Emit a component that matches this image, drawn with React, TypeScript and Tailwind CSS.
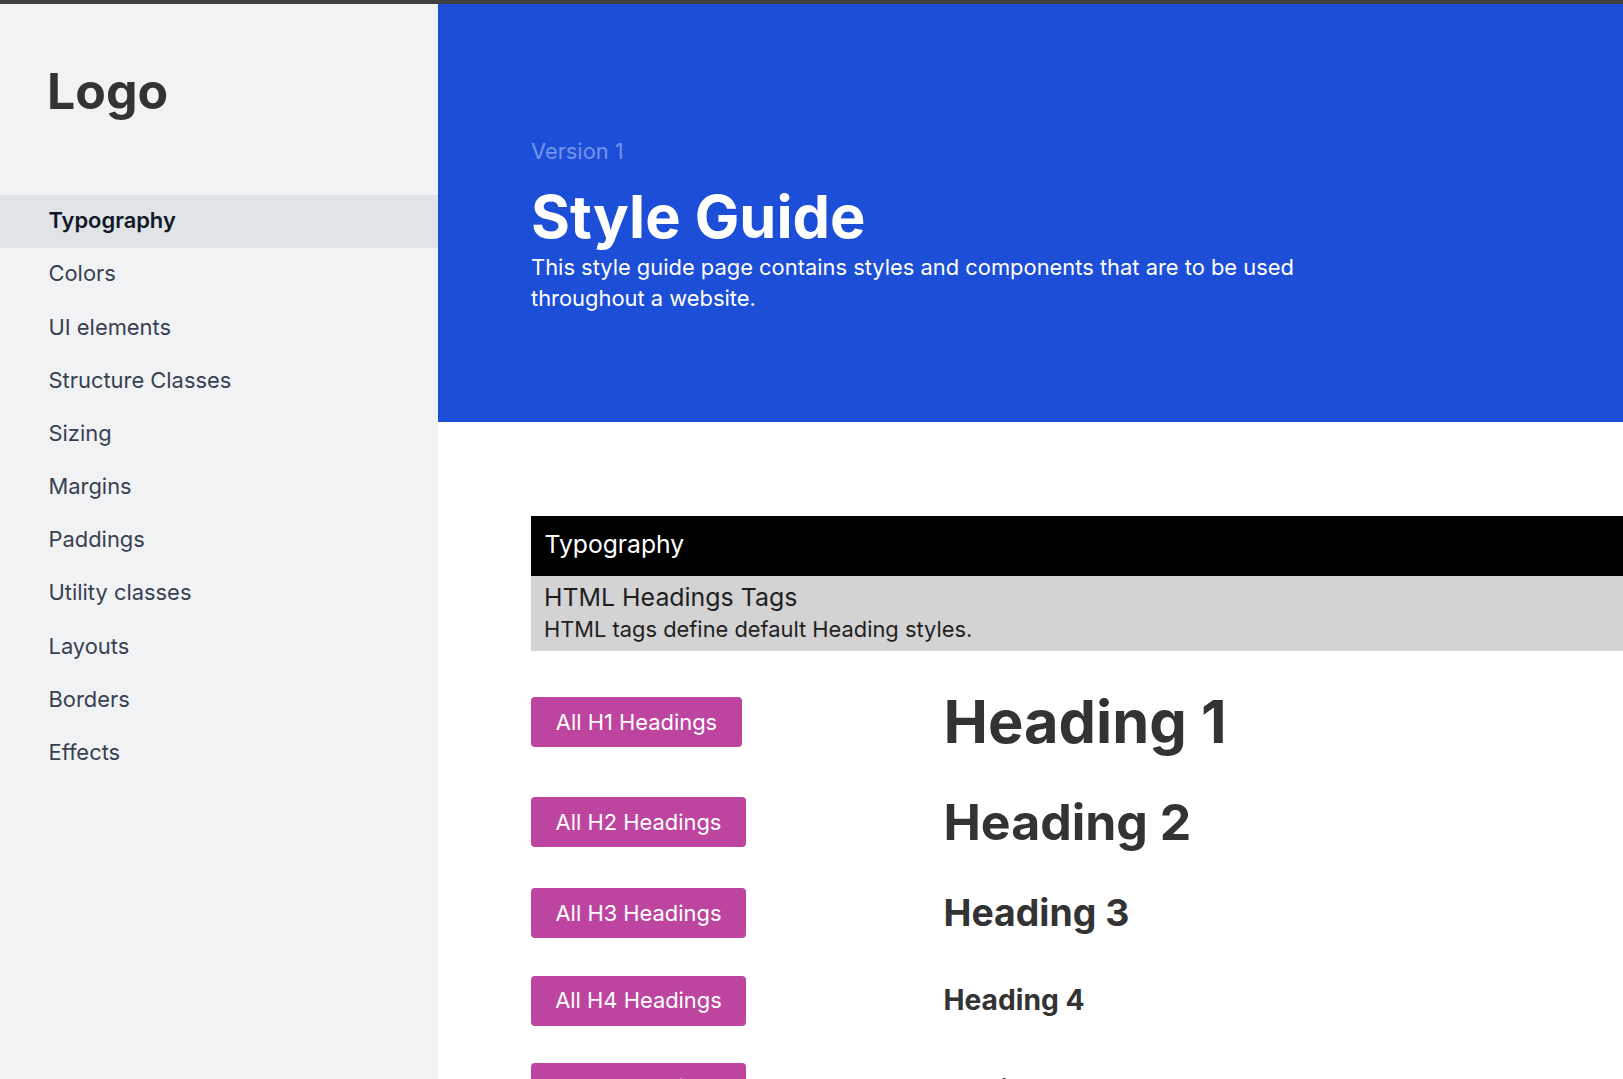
const NAV_ITEMS = [
  "Typography",
  "Colors",
  "UI elements",
  "Structure Classes",
  "Sizing",
  "Margins",
  "Paddings",
  "Utility classes",
  "Layouts",
  "Borders",
  "Effects",
]

const HEADINGS = [
  { label: "All H1 Headings", title: "Heading 1", width: "w-[211px]", size: "text-[59.5px]", gap: "mb-[50px]" },
  { label: "All H2 Headings", title: "Heading 2", width: "w-[215px]", size: "text-[50px]", gap: "mb-[41px]" },
  { label: "All H3 Headings", title: "Heading 3", width: "w-[215px]", size: "text-[37.4px]", gap: "mb-[37.5px]" },
  { label: "All H4 Headings", title: "Heading 4", width: "w-[215px]", size: "text-[28.2px]", gap: "mb-[37px]" },
  { label: "All H5 Headings", title: "Heading 5", width: "w-[215px]", size: "text-[22.4px]", gap: "mb-[37px]" },
]

export default function App() {
  return (
    <div className="flex h-screen flex-col overflow-hidden bg-white font-['Inter',sans-serif] text-[#333333]">
      {/* Strip of the window above the page */}
      <div className="h-[4px] shrink-0 bg-[#404040]" />

      <div className="flex min-h-0 flex-1">
        {/* Sidebar */}
        <aside className="w-[437.5px] shrink-0 bg-[#f1f2f4]">
          <div className="flex h-[191px] items-start pl-[47px] pt-[53px]">
            <span className="text-[50px] leading-[68px] font-bold">Logo</span>
          </div>
          <nav className="flex flex-col">
            {NAV_ITEMS.map((item, index) => (
              <a
                key={item}
                className={
                  index === 0
                    ? "flex h-[53.2px] items-center bg-[#e1e4e7] pb-[2px] pl-[48.5px] text-[21.9px] font-semibold text-[#111827]"
                    : "flex h-[53.2px] items-center pb-[2px] pl-[48.5px] text-[21.9px] text-[#374151]"
                }
              >
                {item}
              </a>
            ))}
          </nav>
        </aside>

        <main className="min-w-0 flex-1">
          {/* Hero */}
          <header className="h-[418px] bg-[#1d4ed8] pt-[130px] pl-[93.5px] text-white">
            <p className="text-[21.8px] leading-[34px] text-[#7493ea]">Version 1</p>
            <h1 className="mt-[14px] text-[59.5px] leading-[68px] font-bold">Style Guide</h1>
            <p className="mt-[1.5px] w-[800px] text-[21.9px] leading-[31px]">
              This style guide page contains styles and components that are to be used throughout a website.
            </p>
          </header>

          <section className="pt-[94px] pl-[93.5px]">
            <div className="flex h-[60px] items-center bg-black px-[13.5px] pb-[2px] text-[24.7px] text-white">Typography</div>
            <div className="h-[75px] bg-[#d3d3d3] px-[13px] pt-[4px] text-[#1f1f1f]">
              <p className="text-[24.9px] leading-[34px]">HTML Headings Tags</p>
              <p className="mt-[1px] text-[21.85px] leading-[29px]">HTML tags define default Heading styles.</p>
            </div>

            <div className="pt-[46px]">
              {HEADINGS.map((row) => (
                <div key={row.title} className={`flex h-[50px] items-center ${row.gap}`}>
                  <div className="w-[412.5px] shrink-0">
                    <button
                      className={`flex h-[50px] items-center justify-center rounded-[4px] bg-[#bd45a0] text-[21.9px] text-white ${row.width}`}
                    >
                      {row.label}
                    </button>
                  </div>
                  <h2 className={`font-bold ${row.size}`}>{row.title}</h2>
                </div>
              ))}
            </div>
          </section>
        </main>
      </div>
    </div>
  )
}
